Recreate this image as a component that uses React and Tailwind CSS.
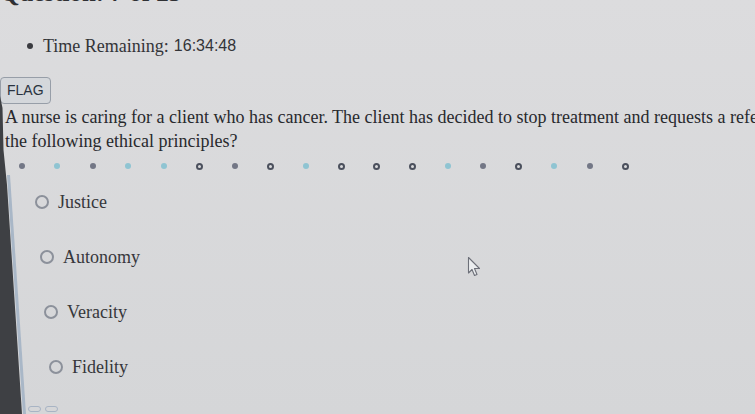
import React from "react";

const dots = ["g","b","g","b","b","r","g","r","b","r","r","r","b","g","r","b","g","r"];
const options = [
  { label: "Justice", pl: "pl-[35px]" },
  { label: "Autonomy", pl: "pl-[40px]" },
  { label: "Veracity", pl: "pl-[44px]" },
  { label: "Fidelity", pl: "pl-[49px]" },
];

function Dot({ t }) {
  if (t === "g") return <div className="w-[6px] h-[6px] rounded-full bg-[#737786]" />;
  if (t === "b") return <div className="w-[6px] h-[6px] rounded-full bg-[#8fc4d2]" />;
  return <div className="w-[7px] h-[7px] rounded-full border-2 border-[#4b505d]" />;
}

export default function App() {
  return (
    <div className="relative w-[755px] h-[414px] overflow-hidden bg-linear-to-b from-[#dcdcde] to-[#d5d6d8] text-[#333438] font-['Liberation_Serif',serif]">
      <h1 className="text-[25px] font-bold leading-none -mt-[20px] whitespace-nowrap text-[#2f3034]">Question: 7 of 25</h1>

      <div className="flex items-center mt-[30px] pl-[27px] h-[22px]">
        <div className="w-[6px] h-[6px] rounded-full bg-[#3a3b40]" />
        <span className="ml-[10px] text-[18px] leading-none">Time Remaining:</span>
        <span className="ml-[5px] text-[16px] leading-none font-['Liberation_Sans',sans-serif]">16:34:48</span>
      </div>

      <div className="mt-[20px] flex">
        <div className="h-[27px] px-[6px] flex items-center border border-[#979ea8] rounded-[4px] bg-[#d4d7db] text-[14px] text-[#2a3340] font-['Liberation_Sans',sans-serif]">FLAG</div>
      </div>

      <div className="pl-[5px] mt-[1px] text-[18px] leading-[24px] text-[#28292d] whitespace-nowrap">
        <div>A nurse is caring for a client who has cancer. The client has decided to stop treatment and requests a referral</div>
        <div>the following ethical principles?</div>
      </div>

      <div className="flex items-center pl-[4px] mt-[8px] h-[10px]">
        {dots.map((t, i) => (
          <div key={i} className="w-[35.5px] flex justify-center">
            <Dot t={t} />
          </div>
        ))}
      </div>

      <div className="flex flex-col mt-[24px] gap-[41px]">
        {options.map((o) => (
          <div key={o.label} className={`flex items-center h-[14px] ${o.pl}`}>
            <div className="w-[14px] h-[14px] rounded-full border-2 border-[#8c919b]" />
            <span className="ml-[9px] text-[18px] leading-none text-[#36373b]">{o.label}</span>
          </div>
        ))}
      </div>

      <svg className="absolute left-0 top-0" width="40" height="414" viewBox="0 0 40 414">
        <polygon points="0,96 2.5,108 3.5,150 7,185 22,414 0,414" fill="#3e4044" />
        <line x1="8.5" y1="175" x2="24.5" y2="414" stroke="#a9b7c7" strokeWidth="3" />
      </svg>

      <div className="absolute left-[28px] top-[406px] w-[13px] h-[6px] rounded-[3px] border border-[#a8b4c4]" />
      <div className="absolute left-[45px] top-[406px] w-[13px] h-[6px] rounded-[3px] border border-[#a8b4c4]" />

      <svg className="absolute left-[467px] top-[256px]" width="16" height="22" viewBox="0 0 16 22">
        <path d="M1.5 1.5 L1.5 17 L5 13.5 L7.5 19.5 L10 18.5 L7.5 12.5 L12.5 12.5 Z" fill="#eceef0" stroke="#6d7079" strokeWidth="1.1" strokeLinejoin="round" />
      </svg>
    </div>
  );
}
